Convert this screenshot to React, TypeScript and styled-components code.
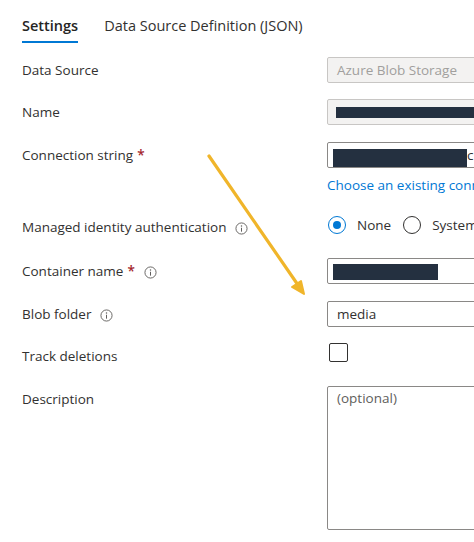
import React from 'react'
import styled, { createGlobalStyle } from 'styled-components'

const GlobalStyle = createGlobalStyle`
    html, body {
        margin: 0;
        padding: 0;
        background: #ffffff;
    }
    body {
        font-family: "Open Sans", "Noto Sans", Arial, sans-serif;
        color: #323130;
        overflow: hidden;
    }
`

const InfoIcon: React.FC = () => (
    <StyledInfo viewBox="0 0 14 14" width="13" height="13">
        <circle cx="7" cy="7" r="6" fill="none" stroke="#605e5c" strokeWidth="1" />
        <circle cx="7" cy="4.3" r="0.8" fill="#605e5c" />
        <path d="M7 6.2 V10.4" stroke="#605e5c" strokeWidth="1.1" />
    </StyledInfo>
)

interface IRowProps {
    label: string
    required?: boolean
    info?: boolean
    top: number
    labelOffset?: number
    children: React.ReactNode
}

const FormRow: React.FC<IRowProps> = ({ label, required = false, info = false, top, labelOffset = 0, children }) => (
    <Row $top={top}>
        <Label $offset={labelOffset}>
            {label}
            {required ? <Required>*</Required> : <></>}
            {info ? <InfoIcon /> : <></>}
        </Label>
        <Field>{children}</Field>
    </Row>
)

const App: React.FC = () => {
    return (
        <Page>
            <GlobalStyle />
            <Tabs>
                <Tab $active>Settings</Tab>
                <Tab>Data Source Definition (JSON)</Tab>
            </Tabs>
            <Form>
                <FormRow label="Data Source" top={14}>
                    <Input $disabled>
                        <InputText $muted>Azure Blob Storage</InputText>
                    </Input>
                </FormRow>
                <FormRow label="Name" top={16}>
                    <Input $disabled>
                        <Redacted $width={140} $top={7} $height={11} $left={8} />
                    </Input>
                </FormRow>
                <FormRow label="Connection string" required top={17}>
                    <Input>
                        <Redacted $width={134} $top={6} $height={18} $left={5} />
                        <InputText $tight>c</InputText>
                    </Input>
                    <Link>Choose an existing connection</Link>
                </FormRow>
                <FormRow label="Managed identity authentication" info top={18} labelOffset={4}>
                    <Radios>
                        <RadioOption>
                            <Radio $checked />
                            <span>None</span>
                        </RadioOption>
                        <RadioOption>
                            <Radio />
                            <span>System</span>
                        </RadioOption>
                    </Radios>
                </FormRow>
                <FormRow label="Container name" required info top={20}>
                    <Input>
                        <Redacted $width={105} $top={5} $height={16} $left={5} />
                    </Input>
                </FormRow>
                <FormRow label="Blob folder" info top={17}>
                    <Input>
                        <InputText>media</InputText>
                    </Input>
                </FormRow>
                <FormRow label="Track deletions" top={14} labelOffset={4}>
                    <Checkbox />
                </FormRow>
                <FormRow label="Description" top={19}>
                    <TextArea>
                        <Placeholder>(optional)</Placeholder>
                    </TextArea>
                </FormRow>
            </Form>
            <Arrow viewBox="0 0 474 542" width="474" height="542">
                <defs>
                    <filter id="soft" x="-10%" y="-10%" width="120%" height="120%">
                        <feGaussianBlur stdDeviation="0.5" />
                    </filter>
                </defs>
                <g filter="url(#soft)">
                    <path d="M209 156 L298 285" stroke="#f0b52c" strokeWidth="3.2" strokeLinecap="round" fill="none" />
                    <path d="M304 294 L292 287 L301 281 Z" fill="#f0b52c" stroke="#f0b52c" strokeWidth="2" strokeLinejoin="round" />
                </g>
            </Arrow>
        </Page>
    )
}

export default App

const Page = styled.div`
    position: relative;
    width: 474px;
    height: 542px;
    overflow: hidden;
    font-size: 13.5px;
`

const Tabs = styled.div`
    display: flex;
    gap: 26px;
    padding-left: 22px;
    padding-top: 14px;
`

const Tab = styled.div<{ $active?: boolean }>`
    font-size: 14.5px;
    line-height: 24px;
    padding-bottom: 3px;
    font-weight: ${(p) => (p.$active ? 600 : 400)};
    color: ${(p) => (p.$active ? '#252423' : '#323130')};
    border-bottom: 2px solid ${(p) => (p.$active ? '#0078d4' : 'transparent')};
`

const Form = styled.div`
    display: flex;
    flex-direction: column;
    padding-left: 22px;
`

const Row = styled.div<{ $top: number }>`
    display: flex;
    align-items: flex-start;
    margin-top: ${(p) => p.$top}px;
`

const Label = styled.div<{ $offset: number }>`
    box-sizing: border-box;
    flex: 0 0 305px;
    display: flex;
    align-items: center;
    line-height: 28px;
    height: 26px;
    padding-top: ${(p) => p.$offset}px;
    color: #323130;
    white-space: nowrap;
`

const Required = styled.span`
    color: #a4262c;
    font-weight: 600;
    margin-left: 4px;
`

const StyledInfo = styled.svg`
    margin-left: 9px;
    margin-top: 2px;
`

const Field = styled.div`
    display: flex;
    flex-direction: column;
    flex: 0 0 240px;
    overflow: hidden;
`

const Input = styled.div<{ $disabled?: boolean }>`
    box-sizing: border-box;
    display: flex;
    align-items: center;
    height: 26px;
    width: 240px;
    border: 1px solid ${(p) => (p.$disabled ? '#c8c6c4' : '#8a8886')};
    border-radius: 2px;
    background: ${(p) => (p.$disabled ? '#f3f2f1' : '#ffffff')};
    overflow: hidden;
`

const InputText = styled.span<{ $muted?: boolean; $tight?: boolean }>`
    padding-left: ${(p) => (p.$tight ? 0 : 9)}px;
    color: ${(p) => (p.$muted ? '#a19f9d' : '#323130')};
    white-space: nowrap;
`

const Placeholder = styled.span`
    padding-left: 9px;
    color: #605e5c;
    white-space: nowrap;
`

const Redacted = styled.div<{ $width: number; $top: number; $height: number; $left: number }>`
    flex: 0 0 ${(p) => p.$width}px;
    align-self: flex-start;
    height: ${(p) => p.$height}px;
    margin-left: ${(p) => p.$left}px;
    margin-top: ${(p) => p.$top}px;
    background: #243040;
`

const Link = styled.div`
    margin-top: 8px;
    line-height: 18px;
    color: #0078d4;
    white-space: nowrap;
`

const Radios = styled.div`
    display: flex;
    align-items: center;
    height: 26px;
    gap: 12px;
    padding-left: 1px;
`

const RadioOption = styled.div`
    display: flex;
    align-items: center;
    gap: 11px;
    white-space: nowrap;
`

const Radio = styled.span<{ $checked?: boolean }>`
    position: relative;
    box-sizing: border-box;
    width: 18px;
    height: 18px;
    border-radius: 50%;
    border: 1px solid ${(p) => (p.$checked ? '#0078d4' : '#323130')};

    &::after {
        content: '';
        position: absolute;
        left: 4px;
        top: 4px;
        width: 8px;
        height: 8px;
        border-radius: 50%;
        background: ${(p) => (p.$checked ? '#0078d4' : 'transparent')};
    }
`

const Checkbox = styled.span`
    box-sizing: border-box;
    display: block;
    width: 19px;
    height: 19px;
    margin-top: 2px;
    margin-left: 2px;
    border: 1px solid #323130;
    border-radius: 2px;
`

const TextArea = styled.div`
    box-sizing: border-box;
    width: 240px;
    height: 144px;
    padding-top: 2px;
    border: 1px solid #8a8886;
    border-radius: 2px;
`

const Arrow = styled.svg`
    position: absolute;
    left: 0;
    top: 0;
    pointer-events: none;
`
